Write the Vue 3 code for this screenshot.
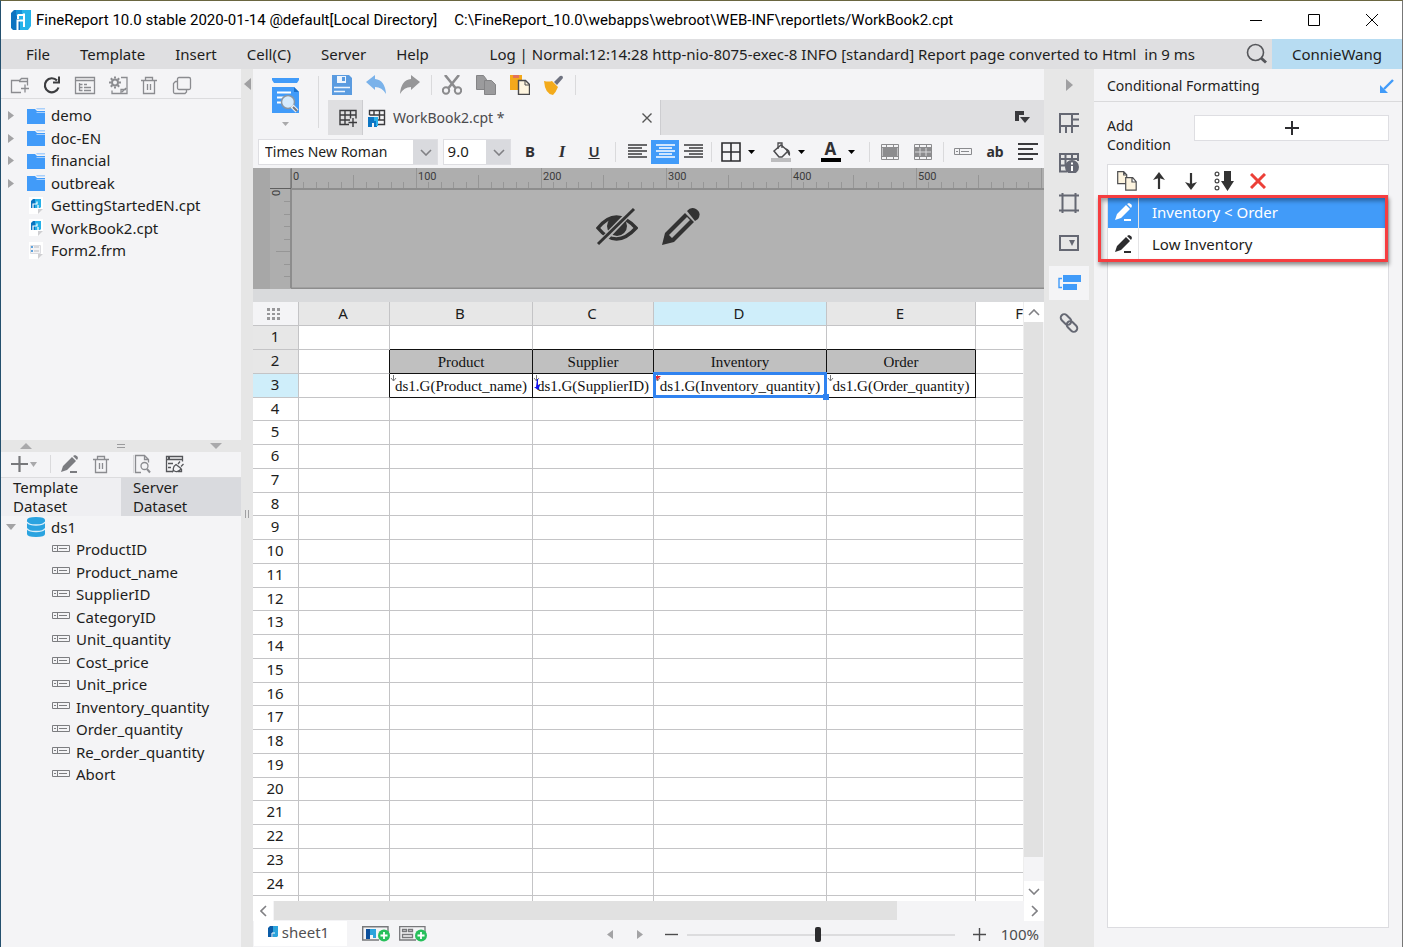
<script setup>
import { ref } from 'vue'

const menus = ['File', 'Template', 'Insert', 'Cell(C)', 'Server', 'Help']
const folders = ['demo', 'doc-EN', 'financial', 'outbreak']
const files = [
  { name: 'GettingStartedEN.cpt', kind: 'cpt' },
  { name: 'WorkBook2.cpt', kind: 'cpt' },
  { name: 'Form2.frm', kind: 'frm' }
]
const fields = [
  'ProductID', 'Product_name', 'SupplierID', 'CategoryID', 'Unit_quantity', 'Cost_price',
  'Unit_price', 'Inventory_quantity', 'Order_quantity', 'Re_order_quantity', 'Abort'
]
const columns = ['A', 'B', 'C', 'D', 'E', 'F']
const cells = {
  B2: 'Product', C2: 'Supplier', D2: 'Inventory', E2: 'Order',
  B3: 'ds1.G(Product_name)', C3: 'ds1.G(SupplierID)',
  D3: 'ds1.G(Inventory_quantity)', E3: 'ds1.G(Order_quantity)'
}
const conditions = ['Inventory < Order', 'Low Inventory']
const selected = ref(0)
const font = ref('Times New Roman')
const size = ref('9.0')
const zoom = ref(49)

const origin = 38
const hTicks = Array.from({ length: 61 }, (_, i) => ({
  x: Math.floor(origin + i * 12.5),
  top: i % 10 === 0 ? 0 : i % 5 === 0 ? 7 : 14,
  label: i % 10 === 0 && i < 60 ? String(i * 10) : ''
}))
const vTicks = Array.from({ length: 7 }, (_, i) => ({
  y: Math.floor(21 + (i + 1) * 12.5),
  left: i === 4 ? 23 : 31
}))

function cellClass(col, row) {
  const boxed = 'BCDE'.includes(col)
  return {
    filled: boxed && row === 2,
    'ink-right': ('ABCDE'.includes(col)) && (row === 2 || row === 3),
    'ink-bottom': boxed && row <= 3,
    picked: col === 'D' && row === 3
  }
}
</script>

<template>
  <div class="window">
    <header class="title">
      <svg class="logo" width="20" height="20" viewBox="0 0 20 20">
        <path fill="#0c72c0" d="M3 0h8v20H2l-2-2V3z" />
        <path fill="#24b3ea" d="M7 0h13v16l-3 4h-8V9H7z" />
        <path fill="#1491d8" d="M5 0h6v6H5z" />
        <path fill="none" stroke="#fff" stroke-width="2" d="M6.500 20v-9.500H13V3.500" />
        <path fill="#fff" d="M7 4h5v2H8v3H6V5zM12 11h2v6h-2z" />
      </svg>
      <h1>FineReport 10.0 stable 2020-01-14 @default[Local Directory]</h1>
      <span class="path">C:\FineReport_10.0\webapps\webroot\WEB-INF\reportlets/WorkBook2.cpt</span>
      <div class="winbtns">
        <button aria-label="Minimize"><svg width="12" height="12"><path d="M0 6.500h12" /></svg></button>
        <button aria-label="Maximize"><svg width="12" height="12"><path d="M.5.5h11v11H.5z" /></svg></button>
        <button aria-label="Close"><svg width="12" height="12"><path d="M0 0l12 12M12 0L0 12" /></svg></button>
      </div>
    </header>

    <nav class="menubar" aria-label="Main menu">
      <button v-for="m in menus" :key="m">{{ m }}</button>
      <p class="log">Log | Normal:12:14:28 http-nio-8075-exec-8 INFO [standard] Report page converted to Html&nbsp; in 9 ms</p>
      <button class="search" aria-label="Search">
        <svg width="22" height="22" fill="none" stroke="#55565a"><circle cx="9.500" cy="9.500" r="8" stroke-width="1.600" /><path d="M15 15l5 4.500" stroke-width="3" /></svg>
      </button>
      <button class="user">ConnieWang</button>
    </nav>

    <div class="body">
      <aside class="left">
        <section class="templates" aria-label="Templates">
          <div class="bar filebar">
            <button aria-label="New folder"><svg width="20" height="20" class="ln"><path d="M11 17.500H1.500v-12h8l2-2h6v7M9 6.500h8M11 13.500h8M15 9.500v8" /></svg></button>
            <button aria-label="Refresh"><svg width="20" height="20" fill="none" stroke="#3c3d40" stroke-width="2.200"><path d="M16.500 12.500A7 7 0 1 1 15 5.500" /><path d="M17 1.500v6h-6" stroke-width="2" /></svg></button>
            <button aria-label="Show in explorer"><svg width="22" height="20" class="ln"><path d="M1.500 2.500h19v16h-19zM1 5.500h20M5.500 8v8M5.500 9.500h3M5.500 12.500h3M5.500 15.500h3M10 9.500h3M10 12.500h7M10 15.500h7" /></svg></button>
            <button aria-label="Rename"><svg width="20" height="20" class="ln"><circle cx="7" cy="7.500" r="3" stroke-width="2" /><path d="M7 1.500v2M7 11.500v2M1 7.500h2M11 7.500h2M2.800 3.300l1.500 1.500M9.700 10.200l1.500 1.500M2.800 11.700l1.500-1.500M9.700 4.800l1.500-1.500" stroke-width="2" /><path d="M13 2.500h6v16H4v-3M13 18v-3.500h5M14 17l4-4" /></svg></button>
            <button aria-label="Delete"><svg width="18" height="20" class="ln"><path d="M1 5.500h16M5.500 5V2.500h7V5M3.500 6v12.500h11V6M7.500 9v6M10.500 9v6" /></svg></button>
            <button aria-label="Copy path"><svg width="20" height="20" class="ln"><rect x="5.500" y="2.500" width="13" height="12" rx="1.500" /><path d="M5 6.500H3.500l-2 2v8.500q0 1.500 1.500 1.500h10l1.500-1.500V15" /></svg></button>
          </div>
          <ul class="tree">
            <li v-for="f in folders" :key="f">
              <svg class="twist" width="6" height="9"><path d="M0 0l6 4.500L0 9z" fill="#a3a3a5" /></svg>
              <svg class="ico" width="18" height="16"><path d="M0 1h8l2 2h8v13H0z" fill="#419bf9" /><path d="M9 0h9v1.500h-8zM10 4h8v1h-9" fill="#a9d0fb" /></svg>
              <span>{{ f }}</span>
            </li>
            <li v-for="f in files" :key="f.name">
              <i class="twist"></i>
              <svg class="ico" width="18" height="18">
                <path d="M2 0h14v12l-4 5H2z" fill="#fff" /><path d="M11 12h5l-5 5z" fill="#cfcfd2" />
                <template v-if="f.kind === 'cpt'"><path d="M6 2h3v9H4V4z" fill="#0b74c0" /><path d="M8 2h6v8l-1 1H8z" fill="#25b0e8" /><path d="M6 11V7h4V4.500M11 11V8" fill="none" stroke="#fff" stroke-width="1.200" /></template>
                <template v-else><path d="M3.500 3.500h10v8h-10z" fill="#f4f4f6" stroke="#dcdce0" /><path d="M4 4h2v2H4zM4 8h2v2H4z" fill="#5da2dd" /><path d="M7 5h5M7 9h5" stroke="#b9bbc0" /></template>
              </svg>
              <span>{{ f.name }}</span>
            </li>
          </ul>
        </section>
        <div class="splitter">
          <svg width="12" height="6"><path d="M0 6l6-6 6 6z" fill="#a9a9ab" /></svg>
          <svg width="8" height="6" stroke="#9b9b9d"><path d="M0 1.500h8M0 4.500h8" /></svg>
          <svg width="12" height="6"><path d="M0 0h12L6 6z" fill="#a9a9ab" /></svg>
        </div>
        <section class="datasets" aria-label="Datasets">
          <div class="bar databar">
            <button aria-label="Add dataset"><svg width="26" height="18"><path d="M0 9h17M8.500 1v16" stroke="#77787b" stroke-width="2.200" /><path d="M19 7h7l-3.500 5z" fill="#a9a9ab" /></svg></button>
            <i class="sep"></i>
            <button aria-label="Edit dataset"><svg width="18" height="18" fill="#7b7c80"><path d="M0 17l2-6L11 2l4 4-9 9zM12 1l2-1q3 1 3 3l-1 2zM9 16h7v2H9z" /></svg></button>
            <button aria-label="Delete dataset"><svg width="18" height="20" class="ln"><path d="M1 5.500h16M5.500 5V2.500h7V5M3.500 6v12.500h11V6M7.500 9v6M10.500 9v6" /></svg></button>
            <i class="sep late"></i>
            <button aria-label="Preview dataset"><svg width="18" height="20" class="ln"><path d="M7 18.500H1.500v-17h9l4 4v3M10.500 1.500v4h4" /><circle cx="10.500" cy="12" r="3.500" /><path d="M13 15l3 3.500" stroke-width="2" /></svg></button>
            <button aria-label="Connections"><svg width="20" height="18" class="ln dk"><path d="M8 16.500H1.500v-15h16v5M1 4.500h17M3 8.500h5M3 12.500h3M3 3h2M16.500 14v2.500H13" /><path d="M8.500 15.500q-1-4 2.500-6l5 4q-2 4-5.500 3zM13 9l2-2.500M16 11.500l2.500-2.500M9 15l-2 2" /></svg></button>
          </div>
          <div class="tabs" role="tablist">
            <button role="tab" aria-selected="true" class="on">Template Dataset</button>
            <button role="tab" aria-selected="false">Server Dataset</button>
          </div>
          <div class="root">
            <svg class="twist" width="10" height="6"><path d="M0 0h10L5 6z" fill="#a3a3a5" /></svg>
            <svg width="18" height="20" fill="#2aa3e0"><path d="M0 3q0-3 9-3t9 3v14q0 3-9 3t-9-3z" /><path d="M0 5q1 3 9 3t9-3M0 11.500q1 3 9 3t9-3" fill="none" stroke="#d8eefa" stroke-width="1.300" /></svg>
            <span>ds1</span>
          </div>
          <ul class="tree fields">
            <li v-for="f in fields" :key="f">
              <svg width="18" height="8" fill="none" stroke="#7c7d80"><path d="M.5.500h17v6H.5zM5.500 1v5M7 3.500h8M2 3.500h2" /></svg>
              <span>{{ f }}</span>
            </li>
          </ul>
        </section>
      </aside>

      <div class="divider">
        <svg width="7" height="12"><path d="M7 0v12L0 6z" fill="#a0a0a2" /></svg>
        <svg width="5" height="8" stroke="#a0a0a2"><path d="M.5 0v8M3.500 0v8" /></svg>
      </div>

      <main class="editor">
        <div class="tools">
          <button class="preview" aria-label="Preview">
            <svg width="28" height="48">
              <path d="M0 0h27v2l-2 3H2L0 2zM0 9h22l5 5v21H0z" fill="#419bf9" /><path d="M22 9l5 5h-5z" fill="#1d71c9" />
              <path d="M5 14.500h14M5 19.500h8M5 24.500h5" stroke="#fff" stroke-width="2" />
              <circle cx="16" cy="24" r="6.500" fill="#d6ebfd" stroke="#8a96a3" stroke-width="1.500" /><path d="M20 28l5 5" stroke="#f1f1f1" stroke-width="4" /><path d="M21 29l4 4" stroke="#737780" stroke-width="2" />
              <path d="M10 44h7l-3.500 4z" fill="#a9a9ab" />
            </svg>
          </button>
          <i class="tallsep"></i>
          <div class="rows">
            <div class="quick">
              <button aria-label="Save"><svg width="20" height="20"><path d="M0 0h17l3 3v17H0z" fill="#5a9be0" /><path d="M5 1h9v7H5z" fill="#eef5fd" /><path d="M10 2h3v4h-3z" fill="#5a9be0" /><path d="M2 12.500h16M2 16.500h11" stroke="#eef5fd" stroke-width="1.600" /></svg></button>
              <button aria-label="Undo"><svg width="20" height="20"><path d="M0 7l9-7v4q10 1 11 15-4-7-11-7v3z" fill="#7ab2ea" /></svg></button>
              <button aria-label="Redo"><svg width="20" height="20"><path d="M20 7l-9-7v4Q1 5 0 19q4-7 11-7v3z" fill="#969698" /></svg></button>
              <i class="sep"></i>
              <button aria-label="Cut"><svg width="20" height="20" fill="none" stroke="#8b8b8d" stroke-width="2"><circle cx="4" cy="15.500" r="3.200" /><circle cx="16" cy="15.500" r="3.200" /><path d="M3 0l10.500 13M17 0L6.500 13" stroke-width="2.600" /></svg></button>
              <button aria-label="Copy"><svg width="20" height="20" fill="#9b9b9d" stroke="#848486"><path d="M.5.500h7l3 4v10H.5z" /><path d="M8.500 5.500h7l4 4v10h-11z" /></svg></button>
              <button aria-label="Paste"><svg width="20" height="20"><path d="M0 0h12v15H0z" fill="#f3a81b" /><path d="M3 0h6v3H3z" fill="#e2725b" /><path d="M8.500 5.500h7l4 4v10h-11z" fill="#fff6e0" stroke="#4a4a4d" stroke-width="1.400" /><path d="M15 6v4h4" fill="none" stroke="#4a4a4d" /></svg></button>
              <button aria-label="Format painter"><svg width="20" height="20"><path d="M10 7l6-6q3-1 3 2l-6 7z" fill="#6e7280" /><path d="M0 6q5 1 8 0l6 6q-2 5-5 8-8-1-9-14z" fill="#f3ab1c" /></svg></button>
              <i class="sep"></i>
            </div>
            <div class="doctabs">
              <button class="new" aria-label="New template"><svg width="18" height="18" fill="none" stroke="#3b3b3e" stroke-width="1.400"><path d="M10 15.500H1v-14h16v8M1 6h16M1 11h10M6 1.500v14M11.500 1.500v8M9.500 13.500h9M14 9v9" /></svg></button>
              <div class="doc">
                <svg width="18" height="18"><path d="M1.500 6V1.500h15v14H10M1.500 6h15M10 11h6.500M6 1.500V6M11.500 1.500V11" fill="none" stroke="#3b3b3e" stroke-width="1.400" /><path d="M0 8h9v10H6v-4H4v4H0z" fill="#0d76c4" /><path d="M6 8h4v9H8v-5H6z" fill="#2ab2ec" /></svg>
                <span>WorkBook2.cpt *</span>
                <button aria-label="Close tab"><svg width="10" height="10"><path d="M.5.500l9 9M9.500.500l-9 9" stroke="#555" stroke-width="1.400" /></svg></button>
              </div>
              <button class="all" aria-label="All tabs"><svg width="16" height="14" fill="#3a3a3d"><path d="M0 0h9v4H4v6H0z" /><path d="M5 6h10l-5 6z" /></svg></button>
            </div>
          </div>
        </div>

        <div class="format">
          <label class="pick wide"><select v-model="font" aria-label="Font"><option>Times New Roman</option><option>Arial</option></select>
            <svg width="12" height="7" class="chev"><path d="M1 1l5 5 5-5" /></svg></label>
          <label class="pick small"><select v-model="size" aria-label="Font size"><option>9.0</option><option>10.0</option></select>
            <svg width="12" height="7" class="chev"><path d="M1 1l5 5 5-5" /></svg></label>
          <button class="w32 bold">B</button>
          <button class="w32 ital">I</button>
          <button class="w32 under">U</button>
          <i class="sep first"></i>
          <button class="w28" aria-label="Align left"><svg width="19" height="15" class="al"><path d="M0 1h19M0 4h14M0 7h19M0 10h14M0 13h19" /></svg></button>
          <button class="w28 active" aria-label="Align center"><svg width="19" height="15" class="al"><path d="M0 1h19M3 4h13M0 7h19M3 10h13M0 13h19" /></svg></button>
          <button class="w28" aria-label="Align right"><svg width="19" height="15" class="al"><path d="M0 1h19M5 4h14M0 7h19M5 10h14M0 13h19" /></svg></button>
          <i class="sep"></i>
          <button class="w50" aria-label="Border"><svg width="20" height="20"><path d="M1 1h18v18H1zM10 1v18M1 10h18" fill="none" stroke="#2d2d30" stroke-width="1.600" /></svg><svg width="7" height="4"><path d="M0 0h7L3.500 4z" /></svg></button>
          <button class="w50" aria-label="Fill"><svg width="20" height="20"><path d="M3 9l7-6 7 6-6 6H8z" fill="#f4f4f6" stroke="#4b4b4e" stroke-width="1.500" /><path d="M7 7V1h4v5" fill="none" stroke="#4b4b4e" stroke-width="1.300" /><path d="M14 6q6 1 5 8-2-1-3-4z" fill="#4b4b4e" /><path d="M0 16h20v4H0z" fill="#bdbdbf" /></svg><svg width="7" height="4"><path d="M0 0h7L3.500 4z" /></svg></button>
          <button class="w50" aria-label="Font color"><span class="acol">A</span><svg width="7" height="4"><path d="M0 0h7L3.500 4z" /></svg></button>
          <i class="sep"></i>
          <button class="w33" aria-label="Merge cells"><svg width="18" height="16" fill="none" stroke="#8c8c8e"><path d="M.5.500h17v15H.5zM1 3.500h16M1 12.500h16M5.500 0v3M12.500 0v3M5.500 13v3M12.500 13v3" /><path d="M2 4h14v8H2z" fill="#8c8c8e" /></svg></button>
          <button class="w33" aria-label="Unmerge cells"><svg width="18" height="16" fill="none" stroke="#8c8c8e"><path d="M1 4h16v8H1z" fill="#8c8c8e" stroke="none" /><path d="M.5.500h17v15H.5zM1 3.500h16M1 12.500h16M5.500 0v3M12.500 0v3M5.500 13v3M12.500 13v3" /><path d="M6 4v8M12 4v8M1 8h16" stroke="#d8d8da" /></svg></button>
          <i class="sep"></i>
          <button class="w32" aria-label="Data column"><svg width="18" height="7" fill="none" stroke="#8a8b8e"><path d="M.5.500h17v6H.5zM5.500 1v5M7 3.500h8M2 3.500h2" /></svg></button>
          <button class="w32 ab">ab</button>
          <button class="w33" aria-label="Rich text"><svg width="20" height="18" class="al al2"><path d="M0 1h20M0 6h15M0 11h20M0 16h15" /></svg></button>
        </div>

        <div class="canvas">
          <svg class="ruler" width="100%" height="121">
            <path d="M0 0h17v121H0z" fill="#a7a7a7" /><rect x="17" y="21" width="21" height="100" fill="#aeaeae" /><rect x="38" width="100%" height="21" fill="#aeaeae" />
            <g stroke="#969696"><line v-for="t in hTicks" :key="t.x" :x1="t.x + 0.5" :x2="t.x + 0.5" :y1="t.top" y2="20" /></g>
            <g stroke="#969696"><line v-for="t in vTicks" :key="t.y" :x1="t.left" x2="37" :y1="t.y + 0.5" :y2="t.y + 0.5" /></g>
            <text v-for="t in hTicks.filter(k => k.label)" :key="t.label" :x="t.x + 2" y="12">{{ t.label }}</text>
            <text transform="translate(27 28) rotate(-90)">0</text>
            <path d="M17 20.500h21v-20" fill="none" stroke="#5f5f5f" />
            <path d="M38 21h3000M38 21v99M38 120.500h3000" fill="none" stroke="#8d8d8d" stroke-width="2" />
          </svg>
          <div class="overlay">
            <button aria-label="Hide"><svg width="42" height="40" fill="none" stroke="#323232"><path d="M2 21Q20-1 40 21 20 43 2 21z" stroke-width="3.500" /><circle cx="21" cy="19" r="10" fill="#323232" stroke="none" /><path d="M0 36L36-1l4 4L5 40z" fill="#b2b2b2" stroke="none" /><path d="M2 37L38 2" stroke-width="3" /></svg></button>
            <button aria-label="Edit"><svg width="40" height="40" fill="#323232"><path fill-rule="evenodd" d="M1 38l3-12L24 6l9 9-20 20zM8 28l3 3L29 13l-3-3z" /><path d="M26 4q4-5 9-2 6 4 2 10l-3 2z" /></svg></button>
          </div>
        </div>

        <div class="sheet">
          <div class="clip">
            <table>
              <colgroup><col class="c0" /><col class="cA" /><col class="cB" /><col class="cC" /><col class="cD" /><col class="cE" /><col /></colgroup>
              <thead>
                <tr>
                  <th class="corner" aria-label="Select all"><svg width="14" height="12" fill="#98989a"><path d="M0 0h3v3H0zM5 0h3v3H5zM10 0h3v3h-3zM0 5h3v2H0zM5 5h3v2H5zM10 5h3v2h-3zM0 9h3v3H0zM5 9h3v3H5zM10 9h3v3h-3z" /></svg></th>
                  <th v-for="c in columns" :key="c" scope="col" :class="{ hot: c === 'D', last: c === 'F' }">{{ c }}</th>
                </tr>
              </thead>
              <tbody>
                <tr v-for="r in 24" :key="r">
                  <th scope="row" :class="{ used: r < 3, hot: r === 3 }">{{ r }}</th>
                  <td v-for="c in columns" :key="c" :class="cellClass(c, r)">
                    <svg v-if="r === 3 && cells[c + r]" class="mark" width="8" height="16">
                      <path d="M3.500 0v6M1 3l2.500 3L6 3" fill="none" stroke="#77787a" />
                      <path v-if="c === 'D'" d="M1 1h6L3 5z" fill="#e8232f" />
                      <path v-if="c === 'C'" d="M4 4h1v6h2l-2 5-4-3h2z" fill="#1414f0" />
                    </svg>{{ cells[c + r] }}
                  </td>
                </tr>
                <tr class="stub"><th></th><td v-for="c in columns" :key="c"></td></tr>
              </tbody>
            </table>
          </div>
          <div class="vscroll">
            <button aria-label="Scroll up"><svg width="12" height="7" class="chev"><path d="M1 6l5-5 5 5" /></svg></button>
            <div class="vthumb"></div>
            <button aria-label="Scroll down"><svg width="12" height="7" class="chev"><path d="M1 1l5 5 5-5" /></svg></button>
          </div>
        </div>
        <div class="hscroll">
          <button aria-label="Scroll left"><svg width="7" height="12" class="chev"><path d="M6 1L1 6l5 5" /></svg></button>
          <div class="htrack"><div class="hthumb"></div></div>
          <button aria-label="Scroll right"><svg width="7" height="12" class="chev"><path d="M1 1l5 5-5 5" /></svg></button>
        </div>
        <footer class="status">
          <button class="sheettab"><svg width="10" height="11"><path d="M2 0h4v11H0V2z" fill="#0b5ca8" /><path d="M5 0h5v10l-1 1H5z" fill="#2ba3dc" /><path d="M4 11V7h3" fill="none" stroke="#fff" /></svg>sheet1</button>
          <button class="add" aria-label="Add sheet"><svg width="28" height="16"><path d="M.7.700H26v6M.7 0v14H17" fill="none" stroke="#77787b" stroke-width="1.400" /><path d="M4 3h4v10H4z" fill="#0b4f9c" /><path d="M8 3h6v9h-3V9H8z" fill="#2ba3dc" /><circle cx="22" cy="9.500" r="6" fill="#27bf5b" /><path d="M18.500 9.500h7M22 6v7" stroke="#fff" stroke-width="1.800" /></svg></button>
          <button class="add" aria-label="Add form sheet"><svg width="28" height="16"><path d="M.7.700H26v6M.7 0v14H17M3.500 3.500h4v2h-4zM9.500 3.500h4v2h-4zM3.500 8.500h10v3h-10z" fill="none" stroke="#77787b" stroke-width="1.300" /><circle cx="22" cy="9.500" r="6" fill="#27bf5b" /><path d="M18.500 9.500h7M22 6v7" stroke="#fff" stroke-width="1.800" /></svg></button>
          <div class="zoomer">
            <button aria-label="Previous sheet"><svg width="6" height="9"><path d="M6 0v9L0 4.500z" fill="#a3a3a5" /></svg></button>
            <button aria-label="Next sheet"><svg width="6" height="9"><path d="M0 0v9l6-4.500z" fill="#a3a3a5" /></svg></button>
            <button class="minus" aria-label="Zoom out"><svg width="13" height="13"><path d="M0 6.500h13" stroke="#4c4c4e" stroke-width="1.400" /></svg></button>
            <input v-model="zoom" type="range" min="0" max="100" aria-label="Zoom" />
            <button class="plus" aria-label="Zoom in"><svg width="13" height="13"><path d="M0 6.500h13M6.500 0v13" stroke="#4c4c4e" stroke-width="1.400" /></svg></button>
            <span>100%</span>
          </div>
        </footer>
      </main>

      <nav class="strip" aria-label="Property panes">
        <button class="fold" aria-label="Collapse"><svg width="7" height="12"><path d="M0 0v12l7-6z" fill="#a0a0a2" /></svg></button>
        <button aria-label="Cell element"><svg width="20" height="20"><path d="M1 20V1h19M13 1v19M1 13h19M14 6.500h6M7 13v7" /></svg></button>
        <button aria-label="Cell attributes"><svg width="20" height="20"><path d="M8 18.500H1V1h18v7M1 6h18M6.500 1v12M13 1v5M1 12.500h7" /><circle cx="13" cy="14" r="6" fill="#656873" /><path d="M13 13v5M13 9.500v2" class="lit" /></svg></button>
        <button aria-label="Floating element"><svg width="20" height="20"><path d="M3.500 0v20M16.500 0v20M0 2.500h20M0 17.500h20" /></svg></button>
        <button aria-label="Widget settings"><svg width="20" height="16"><path d="M1 1h18v14H1z" /><path d="M10 5h6l-3 6z" class="solid" /></svg></button>
        <button class="on" aria-label="Conditional formatting"><svg width="24" height="16"><path d="M5 3.500H2v9h3" class="hi" /><path d="M6 0h18v7H6zM6 9h14v6H6z" class="hifill" /></svg></button>
        <button aria-label="Hyperlink"><svg width="20" height="20"><rect x="1" y="3" width="12" height="7" rx="3.500" transform="rotate(45 7 6.500)" /><rect x="7" y="10" width="12" height="7" rx="3.500" transform="rotate(45 13 13.500)" /></svg></button>
      </nav>

      <aside class="right">
        <header>
          <h2>Conditional Formatting</h2>
          <button aria-label="Pop out"><svg width="14" height="14"><path d="M13 1L4 10" stroke="#419bf9" stroke-width="2.400" /><path d="M0 6v8h8z" fill="#419bf9" /></svg></button>
        </header>
        <div class="addrow">
          <label for="add-cond">Add Condition</label>
          <button id="add-cond" aria-label="Add Condition"><svg width="14" height="14"><path d="M0 7h14M7 0v14" stroke="#2d2d30" stroke-width="2" /></svg></button>
        </div>
        <div class="listbox">
          <div class="listbar">
            <button aria-label="Copy"><svg width="20" height="20" fill="#fdf4df" stroke="#4e4e50" stroke-width="1.200"><path d="M.7.700h6l3 3v9H.7zM6.700 1v3h3" /><path d="M8.700 6.700h7l3.500 4v8.500H8.700zM15 7v4h4" /></svg></button>
            <button aria-label="Move up"><svg width="14" height="18"><path d="M7 17V3" stroke="#333" stroke-width="2.200" /><path d="M1 8l6-8 6 8-6-2z" fill="#333" /></svg></button>
            <button aria-label="Move down"><svg width="14" height="18"><path d="M7 1v14" stroke="#333" stroke-width="2.200" /><path d="M1 10l6 8 6-8-6 2z" fill="#333" /></svg></button>
            <button aria-label="Move to bottom"><svg width="20" height="20"><g fill="none" stroke="#444" stroke-width="1.200"><circle cx="3" cy="3" r="1.900" /><circle cx="3" cy="10" r="1.900" /><circle cx="3" cy="17" r="1.900" /></g><path d="M10 0h7v10h3l-6.500 10L7 10h3z" fill="#333" /></svg></button>
            <button aria-label="Delete"><svg width="16" height="16"><path d="M1 1l14 14M15 1L1 15" stroke="#ec4038" stroke-width="3" /></svg></button>
          </div>
          <div class="conds">
            <ul>
              <li v-for="(c, i) in conditions" :key="c" :class="{ on: selected === i }">
                <button class="pen" :aria-label="'Edit ' + c"><svg width="18" height="18" fill="currentColor"><path d="M0 17l2-6L11 2l4 4-9 9zM12 1l2-1q3 1 3 3l-1 2zM9 16h7v2H9z" /></svg></button>
                <button class="name" @click="selected = i">{{ c }}</button>
              </li>
            </ul>
            <div class="frame"></div>
          </div>
        </div>
      </aside>
    </div>
  </div>
</template>

<style>
body { background: #f4f4f6; }
</style>

<style scoped>
* { box-sizing: border-box; }
.window {
  display: flex; flex-direction: column; min-height: 100vh;
  border: 1px solid #24506e; border-top-color: #6a6640; border-right-color: #777; border-bottom: 0;
  background: #f4f4f6; color: #1d1d20;
  font: 15px/19px "Noto Sans", "Open Sans", sans-serif;
}
button { border: 0; background: none; padding: 0; margin: 0; font: inherit; color: inherit; display: flex; align-items: center; justify-content: center; flex: none; }
ul { list-style: none; margin: 0; padding: 0; }
h1, h2, p { margin: 0; font: inherit; }
svg { display: block; flex: none; }
.sep { width: 1px; height: 20px; background: #dadadc; flex: none; }
.ln { fill: none; stroke: #8b8c90; stroke-width: 1.3; }
.dk { stroke: #55565a; }
.chev { fill: none; stroke: #808084; stroke-width: 1.6; }

.title { height: 38px; display: flex; align-items: center; background: #fff; color: #000; padding-left: 10px; font: 15px/20px "Roboto", "Open Sans", sans-serif; white-space: nowrap; }
.logo { margin-right: 5px; }
.path { margin-left: 17px; }
.winbtns { margin-left: auto; display: flex; padding-right: 1px; }
.winbtns button { width: 58px; height: 38px; }
.winbtns path { fill: none; stroke: #000; }

.menubar { height: 30px; display: flex; align-items: center; background: #dfdfe1; white-space: nowrap; padding-left: 10px; }
.menubar > button { padding: 0 15px; }
.log { margin-left: auto; padding-top: 1px; }
.menubar .search { padding: 0 4px 0 51px; }
.menubar .user { width: 130px; height: 30px; background: #b7dcf2; }

.body { flex: 1; display: flex; }
.left { width: 240px; flex: none; display: flex; flex-direction: column; }
.templates { height: 371px; }
.bar { display: flex; align-items: center; border-bottom: 1px solid #dcdcde; }
.filebar { height: 30px; padding: 3px 0 0 9px; gap: 12px; }
.filebar button:last-child { margin-left: 2px; }
.tree { padding-top: 5px; }
.tree li { height: 23px; display: flex; align-items: center; }
.tree li:nth-child(even) { height: 22px; }
.twist { width: 6px; margin-left: 7px; flex: none; }
.tree .ico { margin: 0 6px 0 13px; }
.splitter { height: 12px; background: #e6e6e6; display: flex; align-items: center; justify-content: space-between; padding: 0 19px; }
.databar { height: 26px; padding: 0 0 2px 10px; gap: 13px; }
.databar .sep { height: 18px; }
.databar .sep + button { margin-left: -3px; }
.databar .late { margin: 0 -10px 0 10px; }
.tabs { display: flex; height: 38px; background: #d9dade; }
.tabs button { width: 120px; padding: 0 30px 0 12px; justify-content: flex-start; text-align: left; }
.tabs .on { background: #efeff2; }
.root { height: 22px; display: flex; align-items: center; gap: 6px; padding-left: 5px; }
.root .twist { width: 10px; margin: 0 5px 0 0; }
.root span { line-height: 22px; }
.fields { padding: 0 0 0 51px; }
.fields li { gap: 6px; }
.fields li svg { margin-bottom: 2px; }

.divider { width: 12px; flex: none; background: #e6e6e6; display: flex; flex-direction: column; align-items: center; padding: 9px 0 0; }
.divider svg + svg { margin-top: 420px; }

.editor { flex: 1; min-width: 0; display: flex; flex-direction: column; }
.tools { height: 66px; display: flex; }
.preview { width: 65px; align-items: flex-start; padding-top: 9px; }
.tallsep { width: 1px; height: 52px; margin-top: 7px; background: #dadadc; }
.rows { flex: 1; padding-left: 9px; display: flex; flex-direction: column; }
.quick { height: 31px; display: flex; align-items: center; gap: 14px; padding-left: 4px; }
.quick .sep { margin: 0 -4px 0 -3px; }
.doctabs { flex: 1; display: flex; background: #dfdfe1; }
.doctabs .new { width: 35px; padding-left: 5px; border-right: 1px solid #cdcdd0; }
.doc { width: 298px; display: flex; align-items: center; background: #f4f4f6; border-right: 1px solid #cdcdd0; padding: 0 8px 0 5px; color: #4a4a4d; font-size: 14px; }
.doc span { margin-left: 7px; flex: 1; }
.doctabs .all { margin-left: auto; width: 43px; }

.format { height: 33px; display: flex; align-items: center; padding-left: 5px; }
.pick { position: relative; height: 26px; margin-right: 5px; background: linear-gradient(#d9dade, #d9dade) right / 24px 100% no-repeat #fff; border: 1px solid #dedee2; }
.pick select { width: 100%; height: 24px; appearance: none; border: 0; background: none; font: inherit; font-size: 14px; color: inherit; padding: 0 24px 0 6px; }
.pick .chev { position: absolute; right: 5px; top: 9px; pointer-events: none; }
.wide { width: 181px; }
.small { width: 69px; margin-right: 3px; }
.pick.small select { padding-left: 4px; font-size: 15px; }
.format .sep { margin: 0 3px 0 4px; }
.format .first { margin: 0 7px 0 5px; }
.format button { height: 24px; color: #303033; }
.format .w28 { width: 28px; } .format .w32 { width: 32px; } .format .w33 { width: 33px; }
.w50 { width: 50px; gap: 7px; padding: 0 10px 0 5px; }
.bold { font-weight: 700; }
.format .ital { font: italic 700 17px "Liberation Serif", serif; }
.under { font-weight: 600; text-decoration: underline; }
.ab { font-weight: 700; font-size: 14px; }
.al { stroke: #3a3a3d; stroke-width: 1.6; }
.al2 { stroke-width: 2.2; }
.active { background: #419bf9; }
.active .al { stroke: #fff; }
.acol { width: 20px; height: 20px; font-size: 17px; line-height: 14px; font-weight: 700; border-bottom: 4px solid #000; text-align: center; }

.canvas { position: relative; height: 121px; background: #b2b2b2; overflow: hidden; }
.ruler text { font: 11px "Roboto", "Noto Sans", sans-serif; fill: #3c3c3c; }
.overlay { position: absolute; inset: 21px 0 0 0; display: flex; justify-content: center; align-items: flex-start; gap: 23px; padding: 18px 0 0 0; }

.sheet { border-top: 13px solid #d9dadc; display: flex; }
.clip { flex: 1; min-width: 0; overflow: hidden; background: #fff; }
table { width: 100%; table-layout: fixed; border-collapse: separate; border-spacing: 0; }
.c0 { width: 46px; } .cA { width: 91px; } .cB { width: 143px; } .cC { width: 121px; } .cD { width: 173px; } .cE { width: 149px; }
th, td { padding: 0; border: 0 solid #c4c4c6; border-width: 0 1px 1px 0; white-space: nowrap; }
tr { height: 24px; }
tbody tr:nth-child(4n) { height: 23px; }
tbody .stub { height: 5px; }
.stub th, .stub td { border-bottom: 0; }
th { font-weight: 400; line-height: 19px; }
thead th { background: #e7e7e7; padding-right: 2px; }
tbody th { padding: 0 1px 2px 0; }
tbody .stub th { padding: 0; }
thead .corner { background: #f4f4f6; padding-right: 4px; }
.corner svg { margin: 0 auto; }
thead .last { background: #fff; text-align: right; padding-right: 0; }
.used { background: #e7e7e7; }
thead .hot, th.hot { background: #cfeefa; }
td { position: relative; text-align: center; font: 15px/20px "Liberation Serif", serif; color: #111; }
.filled { background: #c0c0c0; }
.ink-right { border-right-color: #111; }
.ink-bottom { border-bottom-color: #111; }
td:last-child, .last { border-right: 0; }
.mark { position: absolute; left: 0; top: 1px; }
.picked::before { content: ""; position: absolute; inset: -2px -1px -1px -1px; border: 3px solid #3083f0; z-index: 1; }
.picked::after { content: ""; position: absolute; right: -3px; bottom: -3px; width: 6px; height: 6px; background: #3083f0; z-index: 2; }
.vscroll { width: 21px; display: flex; flex-direction: column; background: #f4f4f6; border-left: 1px solid #eee; }
.vscroll button { height: 20px; background: #fff; }
.vthumb { flex: 1; margin: 0 1px 24px 0; background: #e1e1e1; }
.hscroll { height: 20px; display: flex; }
.hscroll button { width: 20px; background: #fff; }
.htrack { flex: 1; }
.hthumb { width: 83%; height: 19px; background: #e1e1e1; margin-left: 1px; }

.status { height: 26px; display: flex; align-items: center; }
.sheettab { width: 93px; height: 25px; margin: 0 15px 1px 1px; background: #fff; gap: 4px; padding: 0 4px 4px 0; color: #505053; line-height: 20px; }
.add { margin-right: 9px; }
.zoomer { margin-left: auto; display: flex; align-items: center; padding: 1px 5px 0 0; color: #4c4c4e; }
.zoomer button { margin-right: 24px; }
.zoomer .minus { margin: 0 9px 0 -2px; }
.zoomer .plus { margin: 0 15px 0 18px; }
.zoomer input { width: 268px; height: 16px; margin: 0; appearance: none; background: linear-gradient(#dcdcde, #dcdcde) center / 100% 2px no-repeat; }
.zoomer input::-webkit-slider-thumb { appearance: none; width: 6px; height: 15px; border-radius: 2px; background: #2c2c2e; }

.strip { width: 50px; flex: none; background: #e7e7e7; display: flex; flex-direction: column; align-items: center; gap: 6px; }
.strip button { width: 40px; height: 34px; }
.strip .fold { height: 31px; }
.strip svg { fill: none; stroke: #656873; stroke-width: 2; }
.strip .fold svg { stroke: none; }
.strip .lit { stroke: #fff; }
.strip .solid { fill: #656873; stroke: none; }
.strip .hi { stroke: #419bf9; stroke-width: 1.4; }
.strip .hifill { fill: #419bf9; stroke: none; }
.strip .on { background: #f4f4f6; }

.right { width: 308px; flex: none; display: flex; flex-direction: column; padding-bottom: 19px; }
.right header { height: 33px; display: flex; align-items: center; justify-content: space-between; padding: 1px 8px 0 13px; border-bottom: 1px solid #dadadc; font-size: 14px; }
.addrow { display: flex; justify-content: space-between; padding: 13px 13px 0; height: 62px; }
.addrow label { width: 76px; padding-top: 1px; font-size: 14px; }
.addrow button { width: 195px; height: 26px; background: #fff; border: 1px solid #dedee2; }
.listbox { flex: 1; margin: 0 13px; background: #fff; border: 1px solid #dcdce0; }
.listbar { height: 31px; display: flex; align-items: center; padding-left: 3px; }
.listbar button { width: 32px; }
.listbar button:nth-child(n + 4) { width: 34px; }
.conds { position: relative; }
.conds li { display: flex; height: 32px; }
.conds .pen { width: 31px; border-right: 1px solid #e4e4e6; color: #2c2c2e; padding-left: 2px; }
.conds .name { flex: 1; justify-content: flex-start; padding-left: 13px; }
.conds .on { background: #419bf9; }
.conds .on button { color: #fff; }
.frame { position: absolute; inset: -1px 0 -2px -10px; border: 3px solid #f63d40; box-shadow: 1px 3px 4px rgba(0, 0, 0, .45), inset 1px 3px 4px rgba(0, 0, 0, .35); pointer-events: none; }
</style>
